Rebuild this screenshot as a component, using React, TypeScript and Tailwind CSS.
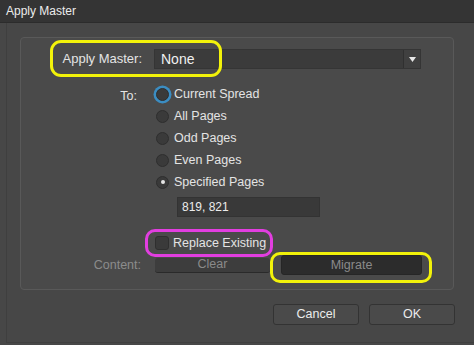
import React from "react";

const font = { fontFamily: '"Liberation Sans", Arial, sans-serif' };

function Radio({ label, focused, checked }: { label: string; focused?: boolean; checked?: boolean }) {
  return (
    <div className="flex h-[22px] items-center">
      <div
        className={
          "ml-[1px] flex h-[13px] w-[13px] items-center justify-center rounded-full border border-[#2e2e2e] bg-[#3a3a3a] " +
          (focused ? "ring-[2.5px] ring-[#3b8dc2]" : "")
        }
      >
        {checked && <div className="h-[4px] w-[4px] rounded-full bg-[#e6e6e6]" />}
      </div>
      <span className="ml-[5px] text-[12.5px] text-[#e4e4e4]">{label}</span>
    </div>
  );
}

export default function App() {
  return (
    <div className="relative flex h-[345px] w-[474px] flex-col overflow-hidden bg-[#474747]" style={font}>
      <div className="flex h-[23px] items-center border-b border-[#2c2c2c] bg-[#343434] pl-[6px] text-[12px] text-[#ececec]">
        Apply Master
      </div>
      <div className="flex flex-1 pl-[6px] pb-[2px]">
        <div className="flex flex-1 flex-col border-l border-b border-[#3f3f3f] pl-[13px] pt-[14px]">
          <div className="flex h-[253px] w-[434px] flex-col rounded-[4px] border border-[#595959] bg-[#4a4a4a] pt-[11px]">
            {/* Apply Master row */}
            <div className="flex h-[20px] items-center">
              <div className="w-[121px] text-right text-[13px] text-[#e4e4e4]">Apply Master:</div>
              <div className="ml-[12px] flex h-[20px] w-[267px] border border-[#353535] bg-[#3b3b3b]">
                <div className="flex flex-1 items-center pl-[6px] text-[14px] text-[#f0f0f0]">None</div>
                <div className="flex w-[17px] items-center justify-center border-l border-[#303030] bg-[#404040]">
                  <svg width="7" height="5" viewBox="0 0 7 5">
                    <path d="M0 0h7L3.5 5z" fill="#e8e8e8" />
                  </svg>
                </div>
              </div>
            </div>
            {/* To: radios */}
            <div className="mt-[14px] flex">
              <div className="h-[22px] w-[116px] pt-[4px] text-right text-[12.5px] text-[#e4e4e4]">To:</div>
              <div className="ml-[18px] flex flex-col">
                <Radio label="Current Spread" focused />
                <Radio label="All Pages" />
                <Radio label="Odd Pages" />
                <Radio label="Even Pages" />
                <Radio label="Specified Pages" checked />
                <div className="mt-[4px] ml-[22px] flex h-[20px] w-[143px] items-center border border-[#333] bg-[#393939] pl-[4px] text-[12px] text-[#ececec]">
                  819, 821
                </div>
              </div>
            </div>
            {/* Replace existing */}
            <div className="mt-[15px] flex h-[22px] items-center pl-[134px]">
              <div className="h-[14px] w-[14px] rounded-[3px] border border-[#2f2f2f] bg-[#3a3a3a]" />
              <span className="ml-[4px] text-[12.5px] text-[#e4e4e4]">Replace Existing</span>
            </div>
            {/* Content row */}
            <div className="mt-[1px] flex h-[20px] items-center">
              <div className="w-[120px] text-right text-[12.5px] text-[#8c8c8c]">Content:</div>
              <div className="ml-[14px] flex h-[15px] w-[115px] items-center justify-center rounded-[3px] border-b border-[#2a2a2a] bg-[#3d3d3d] text-[12.5px] text-[#8a8a8a]">
                Clear
              </div>
              <div className="ml-[11px] flex h-[20px] w-[141px] items-center justify-center rounded-[3px] border border-[#262626] bg-[#2c2c2c] text-[12.5px] text-[#8a8a8a]">
                Migrate
              </div>
            </div>
          </div>
          {/* Bottom buttons */}
          <div className="mt-[14px] flex w-[435px] justify-end gap-[10px]">
            <div className="flex h-[21px] w-[86px] items-center justify-center rounded-[3px] border border-[#333] bg-[#4a4a4a] text-[12.5px] text-[#ececec]">
              Cancel
            </div>
            <div className="flex h-[21px] w-[86px] items-center justify-center rounded-[3px] border border-[#333] bg-[#4a4a4a] text-[12.5px] text-[#ececec]">
              OK
            </div>
          </div>
        </div>
      </div>
      {/* Annotations */}
      <div className="absolute left-[50px] top-[40px] h-[37px] w-[172px] rounded-[11px] border-[3px] border-[#f2f20a]" />
      <div className="absolute left-[145px] top-[229px] h-[28px] w-[128px] rounded-[10px] border-[3px] border-[#e23ee0]" />
      <div className="absolute left-[270px] top-[252px] h-[31px] w-[162px] rounded-[10px] border-[3px] border-[#f2f20a]" />
    </div>
  );
}
